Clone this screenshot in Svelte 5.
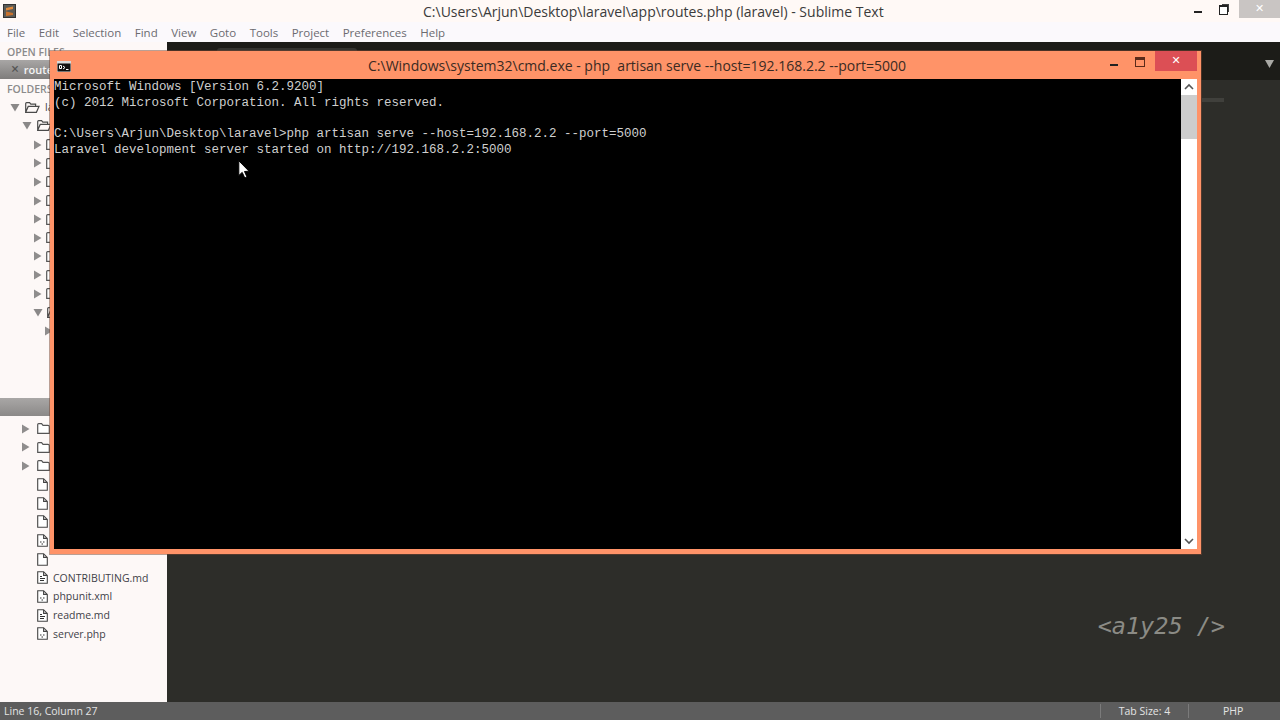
<script>
  const menus = ["File", "Edit", "Selection", "Find", "View", "Goto", "Tools", "Project", "Preferences", "Help"];
  const upperRows = [0, 1, 2, 3, 4, 5, 6, 7, 8];
  const lowerFolders = [0, 1, 2];
  const plainFiles = ["plain", "plain", "plain", "code", "plain"];
  const namedFiles = [
    { name: "CONTRIBUTING.md", kind: "text" },
    { name: "phpunit.xml", kind: "code" },
    { name: "readme.md", kind: "text" },
    { name: "server.php", kind: "code" },
  ];
  const consoleLines = [
    "Microsoft Windows [Version 6.2.9200]",
    "(c) 2012 Microsoft Corporation. All rights reserved.",
    "",
    "C:\\Users\\Arjun\\Desktop\\laravel>php artisan serve --host=192.168.2.2 --port=5000",
    "Laravel development server started on http://192.168.2.2:5000",
  ];
</script>

{#snippet arrowRight()}
  <svg class="arrow" width="9" height="10" viewBox="0 0 9 10"><path d="M1 0.5 L8.5 5 L1 9.5 Z" fill="#8f8d8d" /></svg>
{/snippet}

{#snippet arrowDown()}
  <svg class="arrow" width="10" height="9" viewBox="0 0 10 9"><path d="M0.5 1 L9.5 1 L5 8.5 Z" fill="#8a8888" /></svg>
{/snippet}

{#snippet folder()}
  <svg class="icon" width="13" height="11" viewBox="0 0 13 11"><path d="M0.7 10.3 V1.6 Q0.7 0.7 1.6 0.7 H4.6 L6 2.4 H11 Q12.3 2.4 12.3 3.6 V10.3 Z" fill="#fff" stroke="#555" stroke-width="1.2" /></svg>
{/snippet}

{#snippet openFolder()}
  <svg class="icon" width="15" height="11" viewBox="0 0 15 11"><path d="M0.7 10.3 V1.6 Q0.7 0.7 1.6 0.7 H4.6 L5.8 2.2 H10.6 V4.4 M0.7 10.3 L3.2 4.4 H14 L11.4 10.3 Z" fill="none" stroke="#4a4a4a" stroke-width="1.2" /></svg>
{/snippet}

{#snippet fileIcon(kind)}
  <svg class="icon" width="11" height="13" viewBox="0 0 11 13">
    <path d="M0.7 12.3 V0.7 H6.6 L10.3 4.4 V12.3 Z M6.6 0.7 V4.4 H10.3" fill="#fff" stroke="#444" stroke-width="1.1" />
    {#if kind === "code"}
      <path d="M3 8 h1.5 M6 8 h1.5 M4.5 10 h1.5" stroke="#333" stroke-width="1.2" />
    {:else if kind === "text"}
      <path d="M3 5.5 h2 M3 7.5 h5 M3 9.5 h4" stroke="#333" stroke-width="1.2" />
    {/if}
  </svg>
{/snippet}

<main class="app">
  <header class="titlebar">
    <svg class="app-icon" width="13" height="14" viewBox="0 0 13 14">
      <rect x="0.5" y="0.5" width="12" height="13" fill="#5b5b56" stroke="#333" />
      <path d="M3 4 L10 2.5 V5 L3 6.5 Z" fill="#e28a3c" />
      <path d="M3 7.5 L10 9 V11 L3 12 Z" fill="#c9722d" />
    </svg>
    <div class="title">C:\Users\Arjun\Desktop\laravel\app\routes.php (laravel) - Sublime Text</div>
    <div class="win-buttons">
      <span class="win-min"></span>
      <span class="win-restore"></span>
      <span class="win-close">✕</span>
    </div>
  </header>

  <nav class="menubar">
    {#each menus as item}
      <span>{item}</span>
    {/each}
  </nav>

  <div class="workspace">
    <aside class="sidebar">
      <div class="side-head">OPEN FILES</div>
      <div class="open-file"><span class="open-x">×</span> routes.php</div>
      <div class="side-head folders">FOLDERS</div>
      <div class="row lvl0">{@render arrowDown()}{@render openFolder()}<span class="row-name">laravel</span></div>
      <div class="row lvl1">{@render arrowDown()}{@render openFolder()}</div>
      {#each upperRows as r}
        <div class="row lvl2">{@render arrowRight()}{@render folder()}</div>
      {/each}
      <div class="row lvl2">{@render arrowDown()}{@render openFolder()}</div>
      <div class="row lvl3">{@render arrowRight()}{@render folder()}</div>

      <div class="side-sep"></div>

      {#each lowerFolders as r}
        <div class="row lvl1b">{@render arrowRight()}{@render folder()}</div>
      {/each}
      {#each plainFiles as kind}
        <div class="row file">{@render fileIcon(kind)}</div>
      {/each}
      {#each namedFiles as f}
        <div class="row file">{@render fileIcon(f.kind)}<span class="row-name">{f.name}</span></div>
      {/each}
    </aside>

    <section class="editor">
      <div class="tabstrip">
        <span class="tab"></span>
        <svg class="tab-arrow" width="9" height="8" viewBox="0 0 9 8"><path d="M0 0 H9 L4.5 8 Z" fill="#a9a9a5" /></svg>
      </div>
      <div class="editor-body">
        <div class="minimap">
          <span></span>
        </div>
        <div class="vscroll"></div>
        <div class="watermark">&lt;a1y25 /&gt;</div>
      </div>
    </section>
  </div>

  <footer class="statusbar">
    <span class="status-left">Line 16, Column 27</span>
    <span class="status-tab">Tab Size: 4</span>
    <span class="status-syntax">PHP</span>
  </footer>

  <div class="cmd">
    <div class="cmd-title">
      <svg class="cmd-icon" width="14" height="11" viewBox="0 0 14 11">
        <rect width="14" height="11" fill="#d8d8d8" />
        <rect x="0.5" y="2.5" width="13" height="8" fill="#111" />
        <path d="M2.5 4.5 h2 v3 h-2 z M6 5 l2 1.5 l-2 1.5 M9 8.5 h2.5" fill="none" stroke="#fff" stroke-width="1" />
      </svg>
      <span class="cmd-caption">C:\Windows\system32\cmd.exe - php&nbsp; artisan serve --host=192.168.2.2 --port=5000</span>
      <div class="cmd-buttons">
        <span class="cmd-min"></span>
        <span class="cmd-max"></span>
        <span class="cmd-close">✕</span>
      </div>
    </div>
    <div class="cmd-body">
      <pre class="console">{consoleLines.join("\n")}</pre>
      <div class="cmd-scroll">
        <svg width="16" height="16" viewBox="0 0 16 16"><path d="M4 10 L8 6 L12 10" fill="none" stroke="#555" stroke-width="1.6" /></svg>
        <div class="cmd-thumb"></div>
        <div class="cmd-track"></div>
        <svg width="16" height="16" viewBox="0 0 16 16"><path d="M4 6 L8 10 L12 6" fill="none" stroke="#555" stroke-width="1.6" /></svg>
      </div>
    </div>
  </div>

  <svg class="cursor" width="12" height="19" viewBox="0 0 12 19">
    <path d="M0.8 0.8 V15.5 L4.2 12.4 L6.8 18 L9 17 L6.5 11.5 L11 11.2 Z" fill="#fff" stroke="#000" stroke-width="1" />
  </svg>
</main>

<style>
  :global(body) {
    background: #fff;
  }
  .app {
    position: relative;
    width: 1280px;
    height: 720px;
    overflow: hidden;
    display: flex;
    flex-direction: column;
    font-family: "Open Sans", "Noto Sans", sans-serif;
    background: #fdf8f7;
  }
  .titlebar {
    height: 22px;
    display: flex;
    align-items: center;
    padding-left: 3px;
    background: #fff9f6;
    flex: none;
  }
  .app-icon {
    flex: none;
    margin-top: -1px;
  }
  .title {
    flex: 1;
    padding-left: 407px;
    font-size: 14px;
    color: #3b3b3b;
    white-space: nowrap;
  }
  .win-buttons {
    display: flex;
    align-items: flex-start;
    height: 22px;
  }
  .win-min {
    width: 8px;
    height: 2px;
    background: #222;
    margin: 11px 0 0 0;
  }
  .win-restore {
    width: 7px;
    height: 7px;
    border: 1px solid #222;
    border-top-width: 2px;
    margin: 5px 0 0 17px;
    background: #fff;
    box-shadow: 2px -2px 0 -1px #444;
  }
  .win-close {
    width: 41px;
    height: 18px;
    margin-left: 11px;
    background: #c9c5c3;
    color: #fff;
    font-size: 11px;
    line-height: 18px;
    text-align: center;
    font-family: "DejaVu Sans", sans-serif;
  }
  .menubar {
    height: 20px;
    flex: none;
    display: flex;
    align-items: center;
    gap: 13.5px;
    padding-left: 7px;
    font-size: 11.5px;
    color: #6b6b70;
    background: #fbf9fc;
  }
  .workspace {
    flex: 1;
    min-height: 0;
    display: flex;
  }
  .sidebar {
    width: 167px;
    flex: none;
    background: #fdf8f7;
    font-size: 11px;
    color: #3f3f48;
    display: flex;
    flex-direction: column;
  }
  .side-head {
    height: 18px;
    line-height: 20px;
    padding-left: 7px;
    font-size: 10.5px;
    font-weight: 600;
    color: #8b8b8b;
  }
  .side-head.folders {
    height: 19px;
    line-height: 21px;
  }
  .open-file {
    height: 19px;
    line-height: 18px;
    padding-left: 11px;
    background: linear-gradient(#a8a6a5, #7f7d7c);
    color: #f4f4f4;
    font-weight: 600;
  }
  .open-x {
    color: #555;
    font-size: 14px;
    margin-right: 2px;
  }
  .row {
    height: 18.65px;
    display: flex;
    align-items: center;
    flex: none;
  }
  .arrow {
    flex: none;
  }
  .icon {
    flex: none;
  }
  .lvl0 {
    padding-left: 10px;
    gap: 5px;
  }
  .lvl1 {
    padding-left: 22px;
    gap: 5px;
  }
  .lvl2 {
    padding-left: 33px;
    gap: 4px;
  }
  .lvl3 {
    padding-left: 44px;
    gap: 4px;
  }
  .lvl1b {
    padding-left: 21px;
    gap: 7px;
  }
  .file {
    padding-left: 37px;
    gap: 5px;
  }
  .row-name {
    white-space: nowrap;
    font-size: 10.5px;
  }
  .side-sep {
    height: 18px;
    margin-top: 58px;
    margin-bottom: 3px;
    background: linear-gradient(#a9a7a6, #8b8988);
    flex: none;
  }
  .editor {
    flex: 1;
    min-width: 0;
    display: flex;
    flex-direction: column;
    background: #2d2d29;
  }
  .tabstrip {
    height: 32px;
    flex: none;
    background: #1c1c18;
    display: flex;
    align-items: flex-start;
    justify-content: space-between;
    padding: 6px 6px 0 50px;
  }
  .tab {
    width: 140px;
    height: 3px;
    background: #33332f;
    border-radius: 6px 6px 0 0;
  }
  .tab-arrow {
    margin-top: 12px;
  }
  .editor-body {
    flex: 1;
    min-height: 0;
    position: relative;
    display: flex;
    justify-content: flex-end;
    border-left: 0;
  }
  .minimap {
    flex: none;
    width: 60px;
    padding-top: 18px;
  }
  .minimap span {
    display: block;
    width: 22px;
    height: 4px;
    background: #40403c;
  }
  .vscroll {
    flex: none;
    width: 8px;
    height: 100%;
    margin-right: 2px;
    margin-left: 8px;
    background: #4a4a4e;
    border-radius: 4px;
    opacity: 0;
  }
  .watermark {
    position: absolute;
    right: 55px;
    top: 532px;
    font-family: "DejaVu Sans Mono", monospace;
    font-style: italic;
    font-size: 23.5px;
    color: #8b8b85;
    white-space: nowrap;
  }
  .statusbar {
    height: 18px;
    flex: none;
    display: flex;
    align-items: center;
    background: #5d5d5d;
    color: #e4e4e4;
    font-size: 10.5px;
  }
  .status-left {
    flex: 1;
    padding-left: 4px;
  }
  .status-tab {
    width: 89px;
    text-align: center;
    border-left: 1px solid #7b7b7b;
    border-right: 1px solid #7b7b7b;
    box-sizing: border-box;
  }
  .status-syntax {
    width: 91px;
    box-sizing: border-box;
    padding-left: 34px;
  }
  .cmd {
    position: absolute;
    left: 50px;
    top: 51px;
    width: 1151px;
    height: 503px;
    background: #ff9368;
    box-shadow: 0 0 0 1px rgba(120, 70, 50, 0.5);
    display: flex;
    flex-direction: column;
    padding: 0 4px 5px;
    box-sizing: border-box;
  }
  .cmd-title {
    height: 28px;
    flex: none;
    display: flex;
    align-items: center;
    position: relative;
    margin-left: 3px;
  }
  .cmd-icon {
    flex: none;
    margin-top: 2px;
  }
  .cmd-caption {
    position: absolute;
    left: 311px;
    top: 5px;
    font-size: 14px;
    color: #3a2a22;
    white-space: nowrap;
  }
  .cmd-buttons {
    margin-left: auto;
    display: flex;
    align-self: flex-start;
    height: 20px;
  }
  .cmd-min {
    width: 8px;
    height: 2px;
    background: #222;
    margin-top: 13px;
  }
  .cmd-max {
    width: 8px;
    height: 6px;
    border: 1px solid #5b2a1a;
    border-top-width: 3px;
    margin: 6px 0 0 17px;
  }
  .cmd-close {
    width: 42px;
    height: 20px;
    margin-left: 10px;
    background: #dc4f55;
    color: #fff;
    font-size: 11px;
    line-height: 20px;
    text-align: center;
    font-family: "DejaVu Sans", sans-serif;
  }
  .cmd-body {
    flex: 1;
    min-height: 0;
    display: flex;
    background: #000;
  }
  .console {
    flex: 1;
    margin: 0;
    padding-top: 1px;
    font-family: "Liberation Mono", monospace;
    font-size: 12.5px;
    line-height: 15.7px;
    color: #cfcfcf;
  }
  .cmd-scroll {
    width: 16px;
    flex: none;
    display: flex;
    flex-direction: column;
    background: #fff;
    height: 100%;
  }
  .cmd-scroll svg {
    flex: none;
  }
  .cmd-thumb {
    height: 44px;
    flex: none;
    background: #cdcdcd;
  }
  .cmd-track {
    flex: 1;
    background: #fff;
  }
  .cursor {
    position: absolute;
    left: 238px;
    top: 160px;
  }
</style>
